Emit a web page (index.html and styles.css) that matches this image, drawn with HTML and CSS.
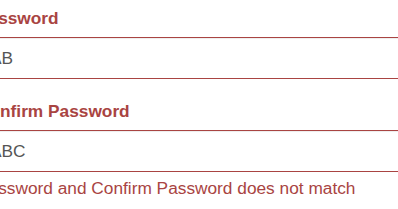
FILE: index.html
```html
<!DOCTYPE html>
<html>
<head>
<meta charset="utf-8">
<link rel="stylesheet" href="styles.css">
</head>
<body>
<form class="form">
  <div class="group">
    <label class="label">Password</label>
    <div class="input">AB</div>
  </div>
  <div class="group">
    <label class="label">Confirm Password</label>
    <div class="input">ABC</div>
    <div class="error">Password and Confirm Password does not match</div>
  </div>
</form>
</body>
</html>
```
FILE: styles.css
```css
html, body {
  margin: 0;
  padding: 0;
  background: #fff;
}
body {
  font-family: "Liberation Sans", Arial, sans-serif;
  overflow: hidden;
}
.form {
  margin-left: -23px;
  width: 460px;
  padding-top: 6px;
}
.group {
  margin-bottom: 20px;
}
.label {
  display: block;
  font-weight: 700;
  font-size: 17.3px;
  line-height: 24px;
  color: #a94442;
  margin-bottom: 7px;
}
.input {
  box-sizing: border-box;
  height: 42px;
  border: 1px solid #a94442;
  box-shadow: inset 0 1px 1px rgba(0,0,0,.075);
  padding: 0 12px;
  font-size: 17.3px;
  line-height: 40px;
  color: #555;
}
.error {
  margin-top: 4px;
  font-size: 17.3px;
  line-height: 24px;
  color: #a94442;
}
```
